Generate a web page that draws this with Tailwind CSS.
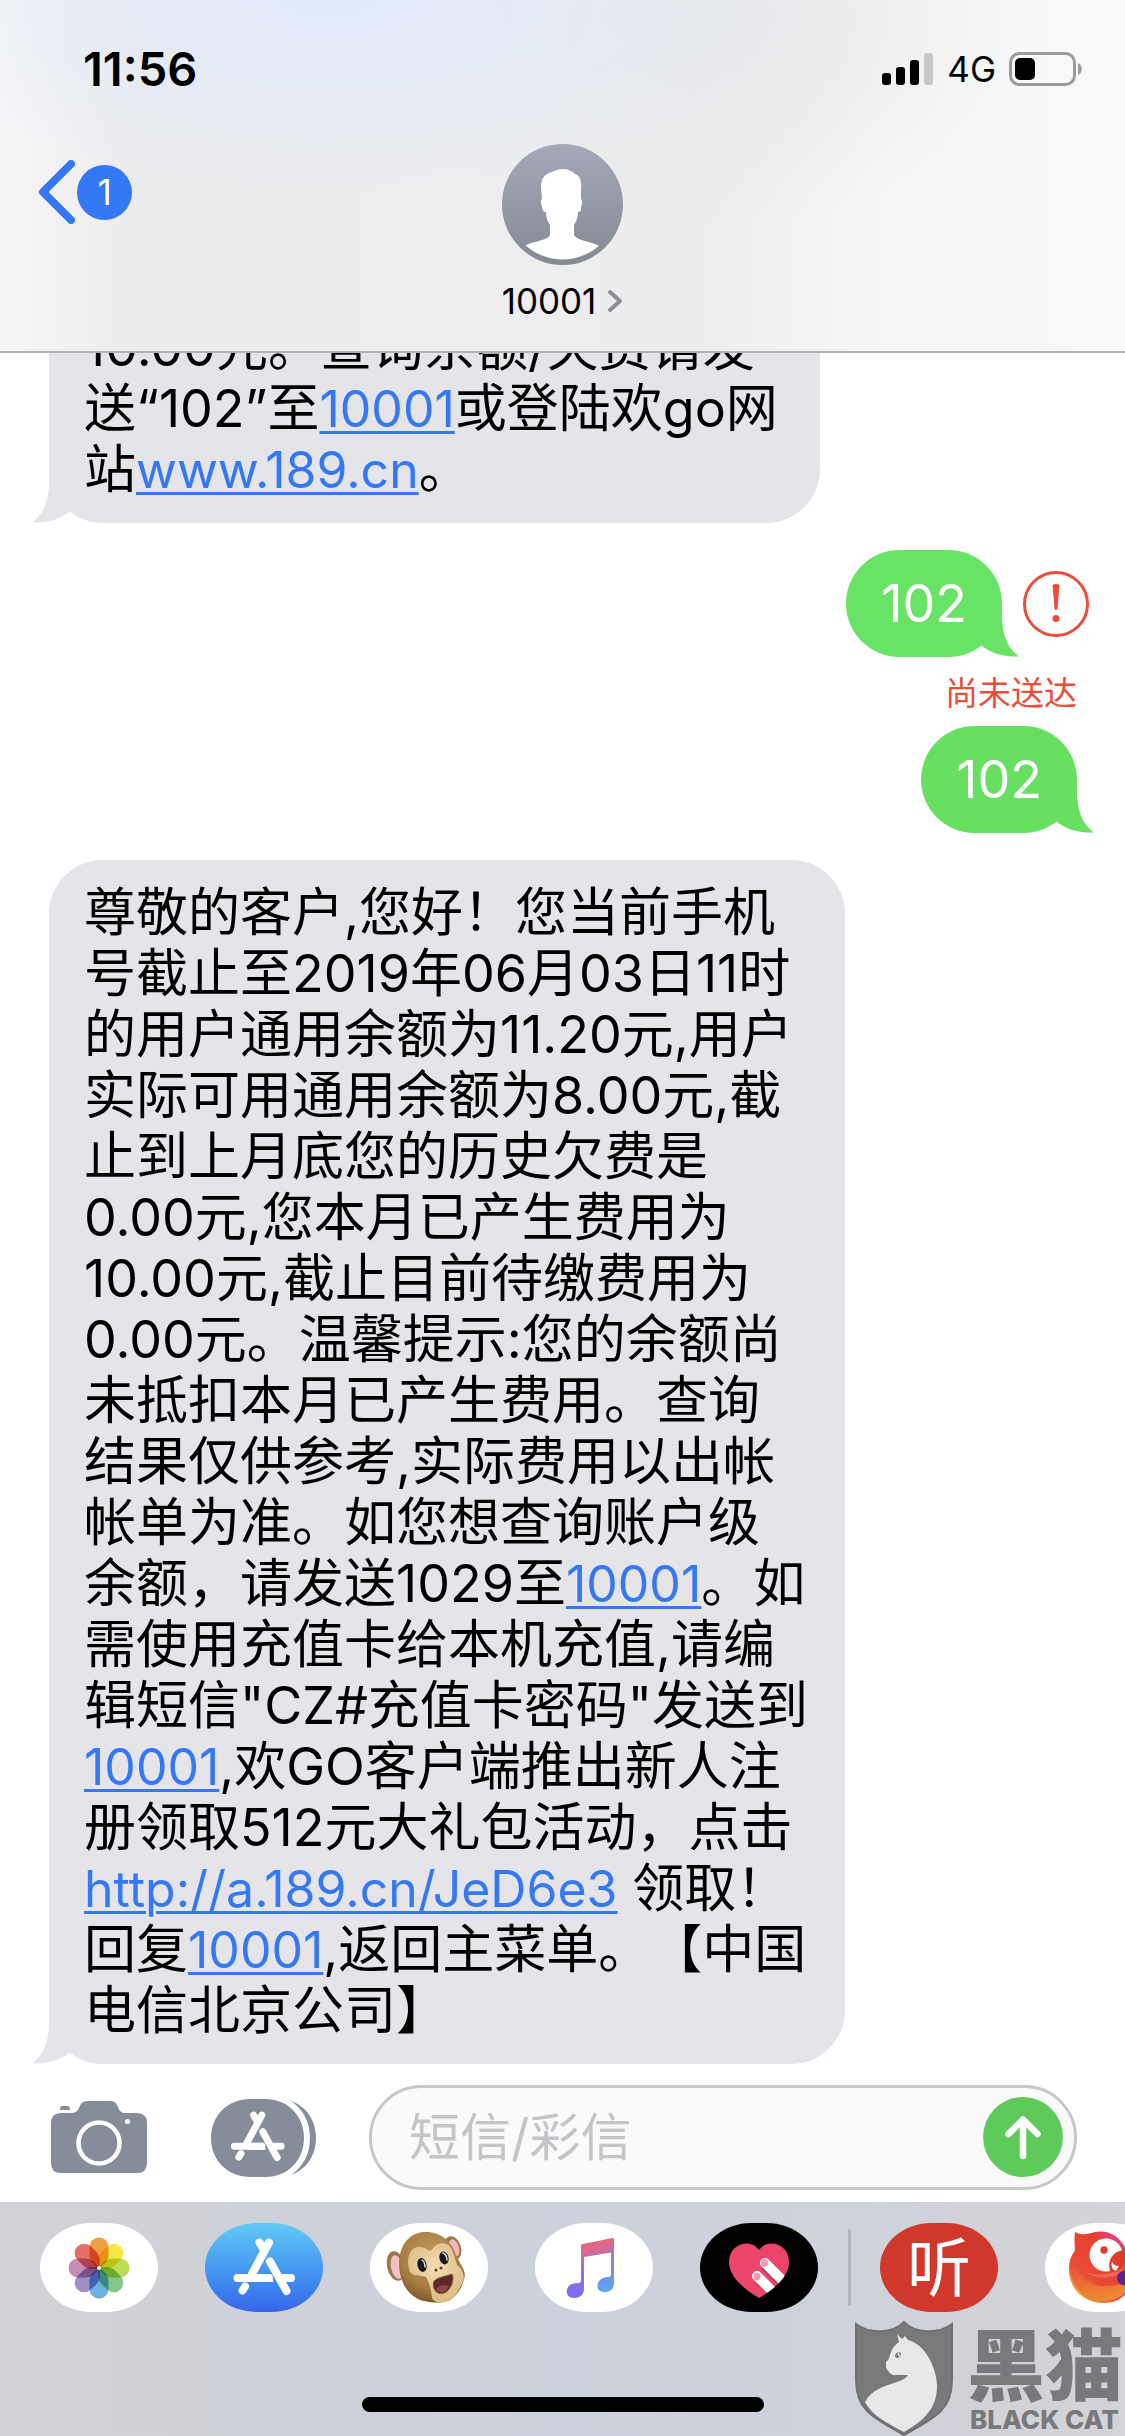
<!DOCTYPE html>
<html lang="zh-CN">
<head>
  <meta charset="UTF-8" />
  <meta name="viewport" content="width=device-width, initial-scale=1.0"/>
  <title>10001</title>
  <script src="https://cdn.jsdelivr.net/npm/@tailwindcss/browser@4"></script>
</head>
<body class="flex h-dvh flex-col overflow-hidden bg-white font-[Inter,'Noto_Sans_CJK_SC',sans-serif] text-black">

  <!-- Shared shapes -->
  <svg class="absolute h-0 w-0" aria-hidden="true">
    <symbol id="tail" viewBox="0 0 50 50">
      <path d="M17 0V8C17 27 12 41 0 49.500C14 50 28 47 38 38L50 30V0Z"/>
    </symbol>
    <symbol id="appstore" viewBox="0 0 118 89">
      <g fill="none" stroke="#fff" stroke-width="8" stroke-linecap="round">
        <path d="M54.500 19.500L59 27"/>
        <path d="M64 19.500L47 51"/>
        <path d="M40 63.500L37.500 67.500"/>
        <path d="M65 38.500L81.500 68"/>
        <path d="M32.500 55H64M77 55H86"/>
      </g>
      <path d="M50 51H66L68.500 59H50Z" fill="#fff"/>
    </symbol>
  </svg>

  <!-- Header -->
  <header class="shrink-0 border-b-2 border-[#b2b2b4] bg-[#f8f8f8] bg-[radial-gradient(ellipse_40%_55%_at_30%_0%,#e0eafa_0%,#e3eaf5cc_45%,transparent_100%),radial-gradient(ellipse_30%_60%_at_62%_5%,#e6e7ea_0%,transparent_100%),linear-gradient(90deg,#f6f6f8_0%,#ececee_12%,#eeeeF0_40%,#ededee_62%,#f6f6f7_78%,#f9f9f9_100%)]">
    <div class="flex items-center justify-between pt-[42px] pr-[42px] pl-[83px]">
      <span class="text-[47px] leading-[54px] font-semibold">11:56</span>
      <div class="flex items-center gap-[13px]">
        <svg class="h-[34px] w-[52px]" viewBox="0 0 52 34">
          <rect x="0" y="21" width="9" height="12" rx="3"/>
          <rect x="14" y="15" width="9" height="18" rx="3"/>
          <rect x="28" y="8" width="9" height="25" rx="3"/>
          <rect x="42" y="1" width="9" height="32" rx="3" fill="#c8c8ca"/>
        </svg>
        <span class="text-[35px] leading-[54px]">4G</span>
        <svg class="h-[34px] w-[74px]" viewBox="0 0 74 34">
          <rect x="1.500" y="1.500" width="64" height="31" rx="9" fill="none" stroke="#9b9b9d" stroke-width="3"/>
          <rect x="6" y="6" width="20" height="22" rx="5"/>
          <path d="M69 11C74 13 74 21 69 23Z" fill="#9b9b9d"/>
        </svg>
      </div>
    </div>
    <div class="grid grid-cols-3 items-start pt-[48px] pb-[28px]">
      <button class="mt-[16px] ml-[38px] flex items-center gap-[2px]" aria-label="返回">
        <svg class="h-[64px] w-[37px]" viewBox="0 0 37 64"><path d="M33 4L5 32L33 60" fill="none" stroke="#3478f6" stroke-width="8" stroke-linecap="round" stroke-linejoin="round"/></svg>
        <span class="flex size-[55px] items-center justify-center rounded-full bg-[#3478f6] text-[35px] text-white">1</span>
      </button>
      <div class="flex flex-col items-center">
        <svg class="size-[121px]" viewBox="0 0 121 121">
          <defs>
            <linearGradient id="avatar" x1="0" y1="0" x2="0" y2="1"><stop offset="0" stop-color="#a5a9b8"/><stop offset="1" stop-color="#848992"/></linearGradient>
            <clipPath id="face"><circle cx="60.500" cy="60.500" r="55"/></clipPath>
          </defs>
          <circle cx="60.500" cy="60.500" r="60.500" fill="url(#avatar)"/>
          <path clip-path="url(#face)" fill="#fff" d="M61 25C66 25 70 27 73 30C78 31 80 38 79 46L79 55C81 56 80 60 79 64C79 67 78 68 76 68C76 74 74 78 72 81V91C75 97 92 98 97 102L108 121H13L23 102C29 97 46 97 48 91V81C46 78 44 74 44 68C41 68 41 66 40 63C39 59 38 56 40 55L39 43C39 34 43 30 50 28C54 26 57 25 61 25Z"/>
        </svg>
        <button class="mt-[14px] flex items-center gap-[11px] text-[35px] leading-[44px]">
          10001
          <svg class="h-[24px] w-[16px]" viewBox="0 0 16 24"><path d="M3 3L13 12L3 21" fill="none" stroke="#8a8f98" stroke-width="4" stroke-linecap="round" stroke-linejoin="round"/></svg>
        </button>
      </div>
    </div>
  </header>

  <!-- Conversation -->
  <main class="flex min-h-0 flex-1 flex-col justify-end overflow-hidden pr-[48px] pl-[49px] text-[52px] leading-[61px] whitespace-nowrap [text-spacing-trim:space-all]">
    <div class="relative w-[771px] self-start rounded-[54px] bg-[#e5e4e9] pt-[22px] pb-[23px] pl-[35px]">
      <svg class="absolute bottom-0 -left-[17px] size-[50px] fill-[#e5e4e9]"><use href="#tail"/></svg>
      <p class="relative">
        10.00元。查询余额/欠费请发<br>
        送“102”至<a href="#" class="text-[50px] leading-none text-[#3478f6] underline decoration-[3px] underline-offset-[4px]">10001</a>或登陆欢go网<br>
        站<a href="#" class="text-[50px] leading-none text-[#3478f6] underline decoration-[3px] underline-offset-[4px]">www.189.cn</a>。
      </p>
    </div>

    <div class="-mr-[12px] mt-[27px] flex items-center gap-[21px] self-end">
      <div class="relative rounded-[54px] bg-[#69e366] px-[35px] py-[23px] text-white">
        <svg class="absolute -right-[17px] bottom-0 size-[50px] -scale-x-100 fill-[#69e366]"><use href="#tail"/></svg>
        <p class="relative">102</p>
      </div>
      <button aria-label="重新发送">
        <svg class="size-[66px]" viewBox="0 0 66 66">
          <circle cx="33" cy="33" r="31.500" fill="none" stroke="#eb4d3d" stroke-width="3"/>
          <path d="M29.500 14Q33 12 36.500 14L34.500 38Q33 40 31.500 38Z" fill="#eb4d3d"/>
          <circle cx="33" cy="47.500" r="3.500" fill="#eb4d3d"/>
        </svg>
      </button>
    </div>
    <p class="pt-[14px] pb-[10px] text-right text-[33px] leading-[45px] text-[#eb4d3d]">尚未送达</p>
    <div class="relative self-end rounded-[54px] bg-[#67e062] px-[35px] py-[23px] text-white">
      <svg class="absolute -right-[17px] bottom-0 size-[50px] -scale-x-100 fill-[#67e062]"><use href="#tail"/></svg>
      <p class="relative">102</p>
    </div>

    <div class="relative mt-[27px] w-[796px] self-start rounded-[54px] bg-[#e5e4e9] pt-[22px] pb-[23px] pl-[35px]">
      <svg class="absolute bottom-0 -left-[17px] size-[50px] fill-[#e5e4e9]"><use href="#tail"/></svg>
      <p class="relative">
        尊敬的客户,您好！您当前手机<br>
        号截止至2019年06月03日11时<br>
        的用户通用余额为11.20元,用户<br>
        实际可用通用余额为8.00元,截<br>
        止到上月底您的历史欠费是<br>
        0.00元,您本月已产生费用为<br>
        10.00元,截止目前待缴费用为<br>
        0.00元。温馨提示:您的余额尚<br>
        未抵扣本月已产生费用。查询<br>
        结果仅供参考,实际费用以出帐<br>
        帐单为准。如您想查询账户级<br>
        余额，请发送1029至<a href="#" class="text-[50px] leading-none text-[#3478f6] underline decoration-[3px] underline-offset-[4px]">10001</a>。如<br>
        需使用充值卡给本机充值,请编<br>
        辑短信"CZ#充值卡密码"发送到<br>
        <a href="#" class="text-[50px] leading-none text-[#3478f6] underline decoration-[3px] underline-offset-[4px]">10001</a>,欢GO客户端推出新人注<br>
        册领取512元大礼包活动，点击<br>
        <a href="#" class="text-[50px] leading-none text-[#3478f6] underline decoration-[3px] underline-offset-[4px]">http://a.189.cn/JeD6e3</a> 领取！<br>
        回复<a href="#" class="text-[50px] leading-none text-[#3478f6] underline decoration-[3px] underline-offset-[4px]">10001</a>,返回主菜单。【中国<br>
        电信北京公司】
      </p>
    </div>
  </main>

  <footer class="shrink-0">
    <!-- Compose bar -->
    <div class="flex items-center pt-[21px] pr-[48px] pb-[12px] pl-[51px]">
      <button class="shrink-0" aria-label="相机">
        <svg class="h-[73px] w-[96px]" viewBox="0 0 96 73" fill="#868c98">
          <path d="M11 5H17Q19 5 19 9H9Q9 5 11 5Z"/>
          <path d="M10 12H20Q26 12 28 7Q30 0 36 0H60Q65 0 67 6Q69 12 74 12H86Q96 12 96 22V62Q96 72 86 72H10Q0 72 0 62V22Q0 12 10 12Z"/>
          <circle cx="48" cy="42" r="20.500" fill="none" stroke="#fff" stroke-width="4.500"/>
          <circle cx="76.500" cy="20.500" r="2.600" fill="#fff"/>
        </svg>
      </button>
      <button class="ml-[64px] shrink-0" aria-label="应用">
        <svg class="h-[78px] w-[106px]" viewBox="0 0 106 78">
          <path d="M40 0H54C77 0 93 17 93 39S77 78 54 78H40C16 78 0 61 0 39S16 0 40 0Z" fill="#868c98"/>
          <path d="M80 2C96 8 105 22 105 39S96 70 80 76C92 68 99 55 99 39S92 10 80 2Z" fill="#868c98"/>
          <use href="#appstore" x="-5" y="-1" width="103" height="78"/>
        </svg>
      </button>
      <div class="ml-[52px] flex h-[105px] min-w-0 flex-1 items-center rounded-full border-3 border-[#c6c6cb] bg-[#fafafa] pr-[11px] pl-[37px]">
        <input type="text" aria-label="短信/彩信" placeholder="短信/彩信" class="h-[80px] min-w-0 flex-1 bg-transparent text-[51px] outline-none placeholder:text-[#c5c5c9]">
        <button class="-mt-[2px] shrink-0" aria-label="发送">
          <svg class="size-[80px]" viewBox="0 0 80 80">
            <circle cx="40" cy="40" r="40" fill="#5eca5a"/>
            <path d="M40 59V23M25.500 37L40 22.500L54.500 37" fill="none" stroke="#fff" stroke-width="6.500" stroke-linecap="round" stroke-linejoin="round"/>
          </svg>
        </button>
      </div>
    </div>

    <!-- App strip -->
    <div class="relative h-[234px] overflow-hidden bg-[#d0d3db] bg-linear-to-r from-[#d1d2d6] via-[#cdd1db] to-[#d3d3d8]">
      <div class="flex gap-[47px] pt-[21px] pl-[40px]">
        <button aria-label="照片" class="h-[89px] w-[118px] shrink-0 overflow-hidden rounded-[52px/45px] bg-white">
          <svg viewBox="0 0 118 89" class="isolate">
            <g transform="translate(59 45)">
              <path class="mix-blend-multiply" d="M0 1L-7 -6Q-9.500 -9 -9.500 -13V-21A9.500 9.500 0 0 1 9.500 -21V-13Q9.500 -9 7 -6Z" fill="#f0a040"/>
              <path class="mix-blend-multiply" transform="rotate(45)" d="M0 1L-7 -6Q-9.500 -9 -9.500 -13V-21A9.500 9.500 0 0 1 9.500 -21V-13Q9.500 -9 7 -6Z" fill="#f7e648"/>
              <path class="mix-blend-multiply" transform="rotate(90)" d="M0 1L-7 -6Q-9.500 -9 -9.500 -13V-21A9.500 9.500 0 0 1 9.500 -21V-13Q9.500 -9 7 -6Z" fill="#bfdc58"/>
              <path class="mix-blend-multiply" transform="rotate(135)" d="M0 1L-7 -6Q-9.500 -9 -9.500 -13V-21A9.500 9.500 0 0 1 9.500 -21V-13Q9.500 -9 7 -6Z" fill="#86c68a"/>
              <path class="mix-blend-multiply" transform="rotate(180)" d="M0 1L-7 -6Q-9.500 -9 -9.500 -13V-21A9.500 9.500 0 0 1 9.500 -21V-13Q9.500 -9 7 -6Z" fill="#6bb0e0"/>
              <path class="mix-blend-multiply" transform="rotate(225)" d="M0 1L-7 -6Q-9.500 -9 -9.500 -13V-21A9.500 9.500 0 0 1 9.500 -21V-13Q9.500 -9 7 -6Z" fill="#9f8dc5"/>
              <path class="mix-blend-multiply" transform="rotate(270)" d="M0 1L-7 -6Q-9.500 -9 -9.500 -13V-21A9.500 9.500 0 0 1 9.500 -21V-13Q9.500 -9 7 -6Z" fill="#c78cb6"/>
              <path class="mix-blend-multiply" transform="rotate(315)" d="M0 1L-7 -6Q-9.500 -9 -9.500 -13V-21A9.500 9.500 0 0 1 9.500 -21V-13Q9.500 -9 7 -6Z" fill="#e5706a"/>
              <circle r="2" fill="#fff"/>
            </g>
          </svg>
        </button>
        <button aria-label="App Store" class="h-[89px] w-[118px] shrink-0 overflow-hidden rounded-[52px/45px] bg-linear-to-b from-[#62caf7] to-[#3566e8]">
          <svg viewBox="0 0 118 89"><use href="#appstore"/></svg>
        </button>
        <button aria-label="拟我表情" class="h-[89px] w-[118px] shrink-0 overflow-hidden rounded-[52px/45px] bg-white">
          <svg viewBox="0 0 118 89">
            <defs>
              <radialGradient id="fur" cx=".5" cy=".3" r=".7"><stop offset="0" stop-color="#bf975a"/><stop offset=".7" stop-color="#a67c41"/><stop offset="1" stop-color="#7d5728"/></radialGradient>
              <radialGradient id="muzzle" cx=".5" cy=".4" r=".7"><stop offset="0" stop-color="#f3ddb2"/><stop offset="1" stop-color="#d6b780"/></radialGradient>
            </defs>
            <ellipse cx="83" cy="25" rx="8" ry="12" transform="rotate(-18 83 25)" fill="#9a7748"/>
            <ellipse cx="84" cy="25" rx="5" ry="9" transform="rotate(-18 84 25)" fill="#efb9bd"/>
            <ellipse cx="26" cy="43" rx="9" ry="15" transform="rotate(-12 26 43)" fill="#9a7748"/>
            <ellipse cx="27" cy="44" rx="6" ry="12" transform="rotate(-12 27 44)" fill="#f2c1c5"/>
            <path d="M54 9C70 8 82 18 86 32C91 43 97 48 94 56C92 66 86 73 80 77C72 81 56 80 48 76C36 70 29 57 29 39C30 22 39 10 54 9Z" fill="url(#fur)"/>
            <path d="M40 49C36 38 38 25 48 24C56 23 57 29 62 27C66 19 78 17 82 27C84 31 85 36 87 42C94 47 96 55 91 63C86 72 82 79 73 79C67 80 63 78 62 75C61 65 59 59 56 54C50 52 44 54 40 49Z" fill="url(#muzzle)"/>
            <ellipse cx="52" cy="42" rx="4.500" ry="7" transform="rotate(-12 52 42)" fill="#17191c"/>
            <ellipse cx="74" cy="35" rx="4.500" ry="6.500" transform="rotate(-15 74 35)" fill="#17191c"/>
            <path d="M52 37Q55 39 55 44M73 30Q77 32 77 37" fill="none" stroke="#dce1e5" stroke-width="1.500" stroke-linecap="round"/>
            <circle cx="66" cy="47" r="1.500" fill="#5b3a1d"/>
            <circle cx="71" cy="45" r="1.500" fill="#5b3a1d"/>
            <path d="M64 58C68 54 77 53 82 51C85 56 81 68 74 70C67 73 61 65 64 58Z" fill="#5b2727" stroke="#8c5d3b"/>
            <path d="M66 66C70 61 76 62 79 63C76 70 69 72 66 66Z" fill="#8b4a4a"/>
          </svg>
        </button>
        <button aria-label="音乐" class="h-[89px] w-[118px] shrink-0 overflow-hidden rounded-[52px/45px] bg-white">
          <svg viewBox="0 0 118 89">
            <defs>
              <linearGradient id="note" x1=".3" y1="0" x2=".5" y2="1"><stop offset="0" stop-color="#f0656c"/><stop offset=".25" stop-color="#d66a94"/><stop offset=".55" stop-color="#9570dc"/><stop offset="1" stop-color="#7668fa"/></linearGradient>
              <linearGradient id="note2" x1="0" y1="0" x2="0" y2="1"><stop offset="0" stop-color="#eb656f"/><stop offset=".4" stop-color="#8f80d2"/><stop offset="1" stop-color="#5aa7f4"/></linearGradient>
            </defs>
            <path d="M46 23Q46 21 48 21L77 15Q79 15 79 17V29L49 34V66C49 72 44 75 39 75C34 75 31 72 32 67C33 61 39 60 44 60Q46 60 46 57Z" fill="url(#note)"/>
            <path d="M76 15Q79 15 79 17V60C79 66 75 69 69 69C64 69 61 65 63 60C65 55 70 54 74 54Q76 54 76 51Z" fill="url(#note2)"/>
          </svg>
        </button>
        <button aria-label="Digital Touch" class="h-[89px] w-[118px] shrink-0 overflow-hidden rounded-[52px/45px] bg-black">
          <svg viewBox="0 0 118 89">
            <clipPath id="heart"><path d="M59 75C47 68 29 55 29 39C29 20 51 15 59 27C67 15 89 20 89 39C89 55 71 68 59 75Z"/></clipPath>
            <g clip-path="url(#heart)">
              <path fill="#eb456c" d="M0 0H118V89H0Z"/>
              <g stroke-linecap="round" stroke-width="10">
                <path d="M66 43L92 69M59 56L83 80" stroke="#b32d50"/>
                <path d="M65 40L93 68M57 53L83 79" stroke="#fff"/>
              </g>
              <ellipse cx="64.500" cy="40" rx="3.500" ry="4" fill="#f29bb4"/>
              <ellipse cx="57" cy="53.500" rx="3.500" ry="4" fill="#f29bb4"/>
            </g>
          </svg>
        </button>
        <div class="-mr-[18px] -ml-[17px] mt-[6px] h-[77px] w-[3px] shrink-0 rounded-full bg-[#b3b4b9]"></div>
        <button class="flex h-[89px] w-[118px] shrink-0 items-center justify-center rounded-[52px/45px] bg-[#d0382b] text-[64px] leading-none text-white">听</button>
        <button aria-label="小鸟" class="h-[89px] w-[118px] shrink-0 overflow-hidden rounded-[52px/45px] bg-white">
          <svg viewBox="0 0 118 89">
            <defs>
              <linearGradient id="bird" x1=".9" y1="0" x2=".2" y2="1"><stop offset="0" stop-color="#e63fc8"/><stop offset=".3" stop-color="#e8402f"/><stop offset=".7" stop-color="#ea4a35"/><stop offset="1" stop-color="#f5b030"/></linearGradient>
              <linearGradient id="belly" x1="0" y1="0" x2="1" y2="1"><stop offset="0" stop-color="#e94a38"/><stop offset="1" stop-color="#f0a331"/></linearGradient>
            </defs>
            <path d="M30 9C37 13 43 11 50 9C66 6 78 16 83 31C94 44 90 80 59 80C36 80 23 63 24 43C25 34 28 31 30 27Q29 17 30 9Z" fill="url(#bird)"/>
            <path d="M26 40C32 58 48 66 73 62C79 60 84 65 78 72C52 88 24 71 26 40Z" fill="url(#belly)" opacity=".8"/>
            <path d="M28 38C38 54 60 55 78 45C76 56 46 62 28 38Z" fill="#f07c72" opacity=".6"/>
            <circle cx="61" cy="32" r="16.500" fill="#fff"/>
            <circle cx="59" cy="27" r="3.700" fill="#e03a2a"/>
            <path d="M82 27C68 27 62 37 65 48L72 49C78 43 82 37 82 27Z" fill="#e03a2a"/>
            <path d="M67 38Q65 46 71 48L74 43Q68 43 67 38Z" fill="#fff"/>
            <circle cx="79" cy="55" r="7" fill="#5b2494"/>
          </svg>
        </button>
      </div>
      <div class="absolute bottom-[24px] left-1/2 h-[15px] w-[402px] -translate-x-1/2 rounded-full bg-black"></div>

      <!-- Watermark -->
      <div class="absolute right-0 bottom-0 flex items-end gap-[14px] pr-[2px] text-[#79797b]">
        <svg class="h-[116px] w-[98px]" viewBox="0 0 98 116">
          <path d="M1 4C14 14 38 14 49 2C60 14 84 14 97 4V60C97 88 84 96 49 115C14 96 1 88 1 60Z" fill="#79797b" stroke="#707072" stroke-width="2"/>
          <path d="M42 14L47 19L50 16L53 20C70 24 82 48 82 66C82 84 74 98 49 112C30 102 18 96 10 82C17 69 30 66 42 62C48 60 51 58 53 55H41C36 56 34 52 31 48V42C35 39 34 36 36 32C37 28 40 25 44 22Z" fill="#e8e8eb"/>
          <path d="M40 35Q42 31 46 33Q46 38 42 38Q40 38 40 35Z" fill="#79797b"/>
          <path d="M43 33L45 37" stroke="#e8e8eb" stroke-width="1.500"/>
        </svg>
        <div class="flex flex-col pb-[3px]">
          <span class="text-[78px] leading-[80px] font-black">黑猫</span>
          <span class="pl-[3px] text-[26px] leading-[26px] font-extrabold">BLACK CAT</span>
        </div>
      </div>
    </div>
  </footer>
</body>
</html>
